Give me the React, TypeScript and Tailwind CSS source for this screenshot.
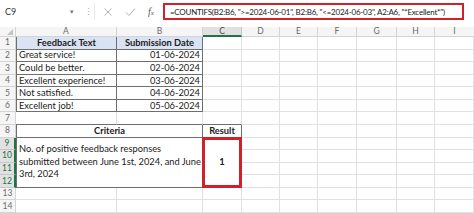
import React from 'react';

const gridCell = 'border-r border-b border-[#e1e1e1]';
const dark = 'border-[#6f6f6f]';

const feedback = [
  ['Great service!', '01-06-2024'],
  ['Could be better.', '02-06-2024'],
  ['Excellent experience!', '03-06-2024'],
  ['Not satisfied.', '04-06-2024'],
  ['Excellent job!', '05-06-2024'],
];

const RowHead = ({ n, selected = false }: { n: number; selected?: boolean }) => (
  <div
    className={
      selected
        ? 'flex items-center justify-center bg-[#e1e1e1] text-[#217346] text-[8.5px] border-b border-[#c8c8c8] border-r-2 border-r-[#217346]'
        : 'flex items-center justify-center bg-[#f5f5f5] text-[#6b6b6b] text-[8.5px] border-b border-r border-[#d4d4d4]'
    }
  >
    {n}
  </div>
);

const Blanks = ({ count }: { count: number }) => (
  <>
    {Array.from({ length: count }).map((_, i) => (
      <div key={i} className={gridCell} />
    ))}
  </>
);

export default function App() {
  return (
    <div className="w-[474px] h-[213px] overflow-hidden bg-white [font-family:Lato,'Liberation_Sans',sans-serif] text-[#1a1a1a]">
      {/* formula bar */}
      <div className="h-[27px] flex items-start pt-[3px]">
        <div className="w-[82px] h-[17px] flex items-center justify-between pl-[5px] pr-[8px]">
          <span className="text-[9px] text-[#333]">C9</span>
          <span className="text-[7px] text-[#777]">▾</span>
        </div>
        <div className="w-[12px] h-[17px] flex items-center justify-center text-[#aaa] text-[9px]">⋮</div>
        <div className="h-[17px] flex items-center gap-[10px] pl-[5px] pr-[9px] border-l border-[#eaeaea]">
          <svg width="10" height="10" viewBox="0 0 10 10" className="ml-[3px]">
            <path d="M1.5 1.5 L8.5 8.5 M8.5 1.5 L1.5 8.5" stroke="#b4b4b4" strokeWidth="1" fill="none" />
          </svg>
          <svg width="11" height="10" viewBox="0 0 11 10" className="ml-[2px]">
            <path d="M1 5.5 L4 8.5 L10 1.5" stroke="#b4b4b4" strokeWidth="1" fill="none" />
          </svg>
          <span className="[font-family:'Liberation_Serif',serif] italic text-[10px] text-[#555] ml-[2px]">
            f<span className="text-[7px]">x</span>
          </span>
        </div>
        <div className="w-[301px] h-[17px] border-2 border-[#d0202a] flex items-center pl-[5px] overflow-hidden">
          <span className="text-[8px] tracking-[-0.22px] text-[#222] whitespace-nowrap">
            =COUNTIFS(B2:B6, "&gt;=2024-06-01", B2:B6, "&lt;=2024-06-03", A2:A6, "*Excellent*")
          </span>
        </div>
      </div>

      {/* sheet */}
      <div className="grid grid-cols-[16px_101px_86px_39px_38px_38px_39px_40px_38px_39px] grid-rows-[10px_repeat(14,12.57px)] text-[9.3px]">
        {/* column headers */}
        <div className="relative bg-[#f5f5f5] border-r border-b border-[#d4d4d4]">
          <svg width="6" height="6" viewBox="0 0 6 6" className="absolute right-[2px] bottom-[1px]">
            <path d="M6 0 L6 6 L0 6 Z" fill="#c4c4c4" />
          </svg>
        </div>
        <div className="flex items-center justify-center bg-[#f5f5f5] text-[#6b6b6b] text-[8.5px] border-r border-b border-[#d4d4d4]">A</div>
        <div className="flex items-center justify-center bg-[#f5f5f5] text-[#6b6b6b] text-[8.5px] border-r border-b border-[#d4d4d4]">B</div>
        <div className="flex items-center justify-center bg-[#e1e1e1] text-[#4a4a4a] text-[8.5px] border-r border-[#c8c8c8] border-b-2 border-b-[#217346]">C</div>
        <div className="flex items-center justify-center bg-[#f5f5f5] text-[#6b6b6b] text-[8.5px] border-r border-b border-[#d4d4d4]">D</div>
        <div className="flex items-center justify-center bg-[#f5f5f5] text-[#6b6b6b] text-[8.5px] border-r border-b border-[#d4d4d4]">E</div>
        <div className="flex items-center justify-center bg-[#f5f5f5] text-[#6b6b6b] text-[8.5px] border-r border-b border-[#d4d4d4]">F</div>
        <div className="flex items-center justify-center bg-[#f5f5f5] text-[#6b6b6b] text-[8.5px] border-r border-b border-[#d4d4d4]">G</div>
        <div className="flex items-center justify-center bg-[#f5f5f5] text-[#6b6b6b] text-[8.5px] border-r border-b border-[#d4d4d4]">H</div>
        <div className="flex items-center justify-center bg-[#f5f5f5] text-[#6b6b6b] text-[8.5px] border-b border-[#d4d4d4]">I</div>

        {/* row 1 */}
        <RowHead n={1} />
        <div className={`flex items-center justify-center font-bold bg-[#dae3f3] border-l border-r border-b ${dark}`}>Feedback Text</div>
        <div className={`flex items-center justify-center font-bold bg-[#dae3f3] border-r border-b ${dark}`}>Submission Date</div>
        <Blanks count={7} />

        {/* rows 2-6 */}
        {feedback.map(([text, date], i) => (
          <React.Fragment key={text}>
            <RowHead n={i + 2} />
            <div className={`flex items-center pl-[2px] whitespace-nowrap border-l border-r border-b ${dark}`}>{text}</div>
            <div className={`flex items-center justify-end pr-[2px] border-r border-b ${dark}`}>{date}</div>
            <Blanks count={7} />
          </React.Fragment>
        ))}

        {/* row 7 */}
        <RowHead n={7} />
        <div className={`border-r border-r-[#e1e1e1] border-b ${dark}`} />
        <div className={`border-r border-r-[#e1e1e1] border-b ${dark}`} />
        <div className={`border-r border-r-[#e1e1e1] border-b ${dark}`} />
        <Blanks count={6} />

        {/* row 8 */}
        <RowHead n={8} />
        <div className={`col-span-2 flex items-center justify-center font-bold border-l border-r border-b ${dark}`}>Criteria</div>
        <div className={`flex items-center justify-center font-bold border-r ${dark}`}>Result</div>
        <Blanks count={6} />

        {/* rows 9-12 */}
        <RowHead n={9} selected />
        <div className={`col-span-2 row-span-4 flex items-center pl-[2px] leading-[12.5px] whitespace-nowrap border-l border-r border-b ${dark}`}>
          <span>
            No. of positive feedback responses
            <br />
            submitted between June 1st, 2024, and June
            <br />
            3rd, 2024
          </span>
        </div>
        <div className="relative row-span-4 flex items-center justify-center font-bold border-r border-b border-[#e1e1e1]">
          <div className="absolute -top-[1px] -left-[1px] -right-[1px] -bottom-[1px] border-[3px] border-[#d0202a]" />
          1
        </div>
        <Blanks count={6} />
        <RowHead n={10} selected />
        <Blanks count={6} />
        <RowHead n={11} selected />
        <Blanks count={6} />
        <RowHead n={12} selected />
        <Blanks count={6} />

        {/* rows 13-14 */}
        <RowHead n={13} />
        <Blanks count={9} />
        <RowHead n={14} />
        <Blanks count={9} />
      </div>
    </div>
  );
}
